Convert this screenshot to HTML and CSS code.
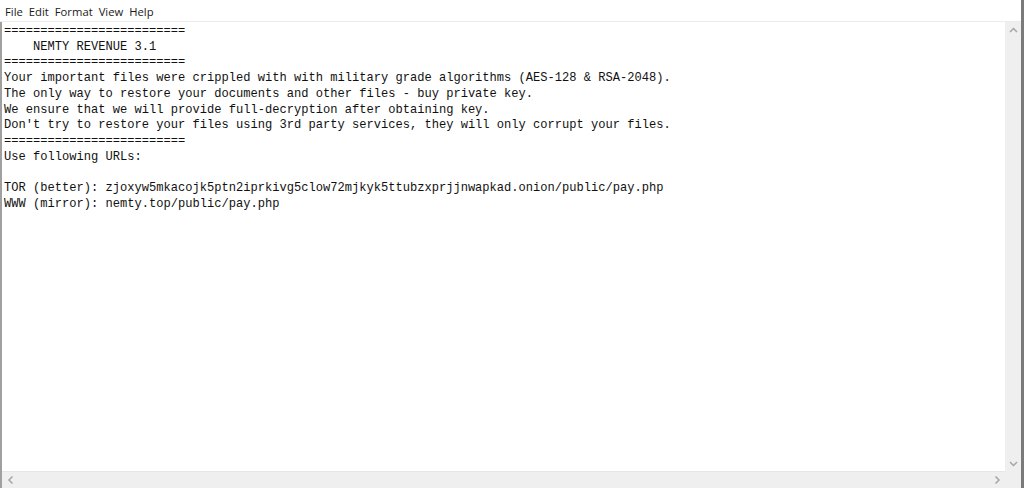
FILE: index.html
```html
<!DOCTYPE html>
<html>
<head>
<meta charset="utf-8">
<link rel="stylesheet" href="styles.css">
</head>
<body>
<div class="window">
  <div class="menubar">
    <span class="menu">File</span>
    <span class="menu">Edit</span>
    <span class="menu">Format</span>
    <span class="menu">View</span>
    <span class="menu">Help</span>
  </div>
  <div class="main">
    <pre class="editor">=========================
    NEMTY REVENUE 3.1
=========================
Your important files were crippled with with military grade algorithms (AES-128 &amp; RSA-2048).
The only way to restore your documents and other files - buy private key.
We ensure that we will provide full-decryption after obtaining key.
Don't try to restore your files using 3rd party services, they will only corrupt your files.
=========================
Use following URLs:

TOR (better): zjoxyw5mkacojk5ptn2iprkivg5clow72mjkyk5ttubzxprjjnwapkad.onion/public/pay.php
WWW (mirror): nemty.top/public/pay.php</pre>
    <div class="vscroll">
      <svg class="arrow" width="15" height="15" viewBox="0 0 15 15"><path d="M4 9 L7.5 5.5 L11 9" fill="none" stroke="#a6a6a6" stroke-width="1.5"/></svg>
      <div class="track"></div>
      <svg class="arrow" width="15" height="15" viewBox="0 0 15 15"><path d="M4 6 L7.5 9.5 L11 6" fill="none" stroke="#a6a6a6" stroke-width="1.5"/></svg>
    </div>
  </div>
  <div class="bottom">
    <div class="hscroll">
      <svg class="arrow" width="16" height="16" viewBox="0 0 16 16"><path d="M9.5 4.5 L6 8 L9.5 11.5" fill="none" stroke="#a6a6a6" stroke-width="1.5"/></svg>
      <div class="track"></div>
      <svg class="arrow" width="16" height="16" viewBox="0 0 16 16"><path d="M6.5 4.5 L10 8 L6.5 11.5" fill="none" stroke="#a6a6a6" stroke-width="1.5"/></svg>
    </div>
    <div class="corner"></div>
  </div>
</div>
</body>
</html>
```
FILE: styles.css
```css
html, body {
  margin: 0;
  padding: 0;
  background: #ffffff;
}
.window {
  width: 1024px;
  height: 488px;
  display: flex;
  flex-direction: column;
  box-sizing: border-box;
  border-right: 3px solid #7a7a7a;
  overflow: hidden;
}
.menubar {
  height: 22px;
  box-sizing: border-box;
  display: flex;
  align-items: center;
  padding: 2px 0 0 5px;
  gap: 6px;
  font-family: "Open Sans", "Noto Sans", sans-serif;
  font-size: 11.25px;
  color: #1a1a1a;
  border-bottom: 1px solid #ececec;
  background: #ffffff;
}
.main {
  flex: 1;
  display: flex;
  min-height: 0;
  border-left: 2px solid #a0a0a0;
}
.editor {
  flex: 1;
  margin: 0;
  padding: 2px 0 0 2px;
  font-family: "Liberation Mono", "DejaVu Sans Mono", monospace;
  font-size: 12.08px;
  line-height: 15.7px;
  color: #111111;
  white-space: pre;
  overflow: hidden;
}
.vscroll {
  width: 16px;
  display: flex;
  flex-direction: column;
  background: #efefef;
  align-items: center;
}
.vscroll .arrow {
  flex: none;
  margin-top: 1px;
}
.vscroll .track {
  flex: 1;
}
.bottom {
  height: 17px;
  display: flex;
  border-left: 2px solid #a0a0a0;
}
.hscroll {
  flex: 1;
  display: flex;
  align-items: center;
  background: #efefef;
  border-top: 1px solid #e6e6e6;
}
.hscroll .arrow {
  flex: none;
  margin: 0 0 0 1px;
}
.hscroll .track {
  flex: 1;
}
.corner {
  width: 16px;
  background: #efefef;
}
```
